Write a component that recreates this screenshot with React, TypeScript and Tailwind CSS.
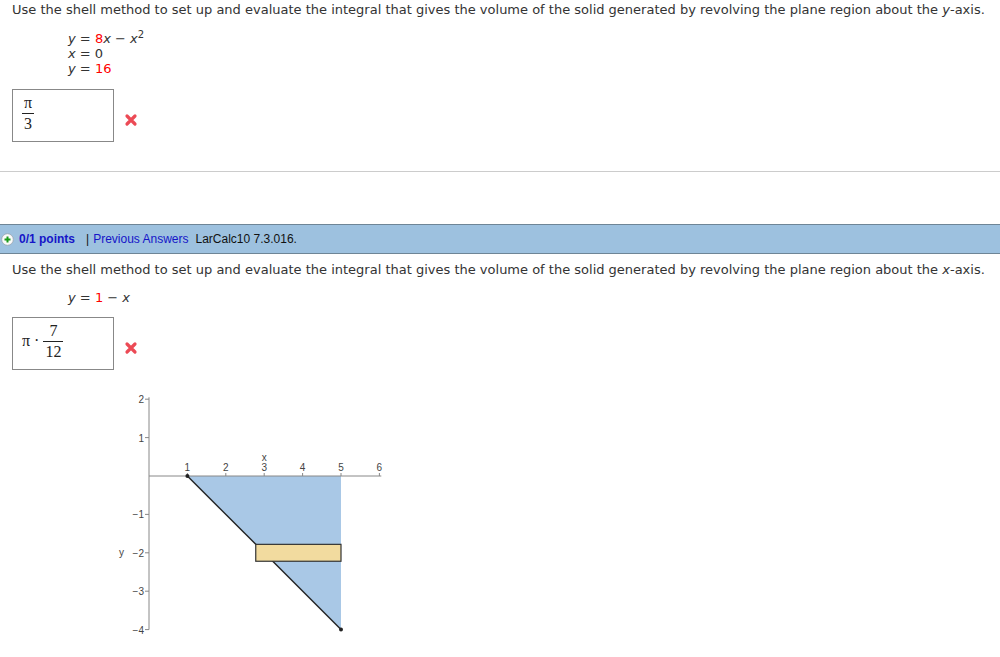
import React from "react";

const sans = { fontFamily: '"DejaVu Sans", Verdana, sans-serif' };

function WrongMark() {
  return (
    <svg width="14" height="14" viewBox="0 0 14 14" className="ml-[10px] mt-[8px]">
      <path d="M3 3 L11 11 M11 3 L3 11" stroke="#ec4a55" strokeWidth="3.2" strokeLinecap="round" />
    </svg>
  );
}

function Frac({ top, bottom }: { top: string; bottom: string }) {
  return (
    <span className="inline-flex flex-col items-center leading-none">
      <span className="px-[2px] pb-[2px] text-[16px]">{top}</span>
      <span className="w-full border-t border-[#222]" />
      <span className="px-[2px] pt-[2px] text-[16px]">{bottom}</span>
    </span>
  );
}

function AnswerBox({ children }: { children: React.ReactNode }) {
  return (
    <div className="flex items-center">
      <div
        className="flex h-[53px] w-[102px] items-center border border-[#888] pb-[5px] pl-[9px] text-[#222]"
        style={{ fontFamily: '"Liberation Serif", "Times New Roman", serif' }}
      >
        {children}
      </div>
      <WrongMark />
    </div>
  );
}

function Chart() {
  const u = 38.4;
  const X = (x: number) => 40 + x * u;
  const Y = (y: number) => 86 + -y * u;
  const xs = [1, 2, 3, 4, 5, 6];
  const ys = [2, 1, -1, -2, -3, -4];
  const font = "Liberation Sans, Arial, sans-serif";
  return (
    <svg width="290" height="250" viewBox="0 0 290 250" className="ml-[109px] mt-[20px]">
      <polygon points={`${X(1)},${Y(0)} ${X(5)},${Y(0)} ${X(5)},${Y(-4)}`} fill="#a9c8e6" />
      <line x1={X(0)} y1={Y(2.05)} x2={X(0)} y2={Y(-4)} stroke="#888" strokeWidth="1" />
      <line x1={X(0)} y1={Y(0)} x2={X(6.05)} y2={Y(0)} stroke="#888" strokeWidth="1" />
      {xs.map((x) => (
        <g key={x}>
          <line x1={X(x)} y1={Y(0)} x2={X(x)} y2={Y(0) - 3} stroke="#888" />
          <text x={X(x)} y={Y(0) - 5} fontSize="10" textAnchor="middle" fill="#444" fontFamily={font}>
            {x}
          </text>
        </g>
      ))}
      <text x={X(3)} y={Y(0) - 15} fontSize="10" textAnchor="middle" fill="#444" fontFamily={font}>
        x
      </text>
      {ys.map((y) => (
        <g key={y}>
          <line x1={X(0)} y1={Y(y)} x2={X(0) - 4} y2={Y(y)} stroke="#888" />
          <text x={X(0) - 5} y={Y(y) + 4} fontSize="10" textAnchor="end" fill="#444" fontFamily={font}>
            {y < 0 ? `\u2212${-y}` : y}
          </text>
        </g>
      ))}
      <text x={X(0) - 30} y={Y(-2) + 3} fontSize="10" fill="#444" fontFamily={font}>
        y
      </text>
      <line x1={X(1)} y1={Y(0)} x2={X(5)} y2={Y(-4)} stroke="#222" strokeWidth="1.4" />
      <rect
        x={X(2.78)}
        y={Y(-1.78)}
        width={X(5) - X(2.78)}
        height={Y(-2.22) - Y(-1.78)}
        fill="#f2db9f"
        stroke="#333"
        strokeWidth="1.2"
      />
      <circle cx={X(1)} cy={Y(0)} r="2" fill="#222" />
      <circle cx={X(5)} cy={Y(-4)} r="2" fill="#222" />
    </svg>
  );
}

function PlusIcon() {
  return (
    <svg width="13" height="13" viewBox="0 0 13 13">
      <circle cx="6.5" cy="6.5" r="5.8" fill="#fafafa" stroke="#9aa4ad" strokeWidth="0.8" />
      <path d="M6.5 3.5 V9.5 M3.5 6.5 H9.5" stroke="#1a9a1a" strokeWidth="2" />
    </svg>
  );
}

export default function App() {
  return (
    <div className="min-h-screen bg-white text-[13px] text-[#333]" style={sans}>
      {/* Question 1 */}
      <div className="px-[12px] pt-[2px]">
        <p className="whitespace-nowrap leading-[16px]">
          Use the shell method to set up and evaluate the integral that gives the volume of the solid generated by
          revolving the plane region about the <i>y</i>-axis.
        </p>
        <div className="mt-[13px] pl-[56px] leading-[15px]">
          <div>
            <i>y</i> = <span className="text-[#f00]">8</span><i>x</i> − <i>x</i>
            <sup className="text-[10px]">2</sup>
          </div>
          <div>
            <i>x</i> = 0
          </div>
          <div>
            <i>y</i> = <span className="text-[#f00]">16</span>
          </div>
        </div>
        <div className="mt-[13px]">
          <AnswerBox>
            <Frac top="π" bottom="3" />
          </AnswerBox>
        </div>
      </div>

      <div className="mt-[29px] border-t border-[#ccc]" />

      {/* Question 2 header */}
      <div
        className="mt-[52px] flex h-[30px] items-center border-y border-[#6e8596] bg-[#9dc1df] pl-[1px] text-[12px]"
        style={{ fontFamily: '"Liberation Sans", Arial, sans-serif' }}
      >
        <PlusIcon />
        <span className="ml-[5px] font-bold text-[#1515c8]">0/1 points</span>
        <span className="ml-[11px] text-[#111]">|</span>
        <span className="ml-[4px] text-[#1515c8]">Previous Answers</span>
        <span className="ml-[7px] text-[#111]">LarCalc10 7.3.016.</span>
      </div>

      <div className="px-[12px] pt-[8px]">
        <p className="whitespace-nowrap leading-[16px]">
          Use the shell method to set up and evaluate the integral that gives the volume of the solid generated by
          revolving the plane region about the <i>x</i>-axis.
        </p>
        <div className="mt-[12px] pl-[56px] leading-[16px]">
          <i>y</i> = <span className="text-[#f00]">1</span> − <i>x</i>
        </div>
        <div className="mt-[11px]">
          <AnswerBox>
            <span className="text-[16px]">π</span>
            <span className="mx-[4px] text-[16px]">·</span>
            <Frac top="7" bottom="12" />
          </AnswerBox>
        </div>
      </div>
      <Chart />
    </div>
  );
}
